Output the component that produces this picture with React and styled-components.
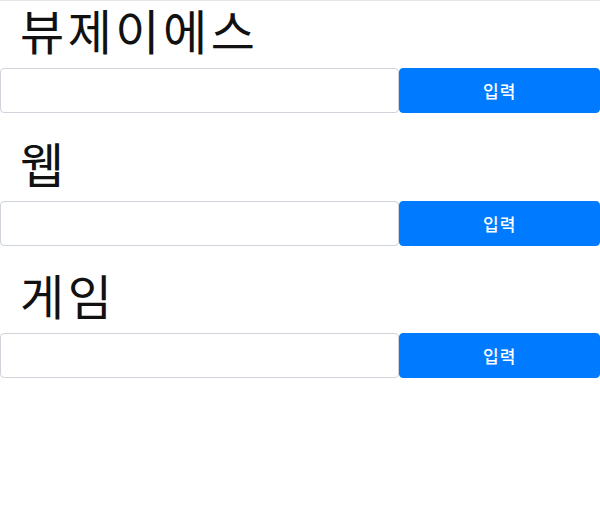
import React from "react";
import styled, { createGlobalStyle } from "styled-components";

const Global = createGlobalStyle`
  html, body { margin: 0; padding: 0; background: #fff; }
  body { font-family: "Noto Sans CJK KR", "Noto Sans", sans-serif; }
  * { box-sizing: border-box; }
`;

const Page = styled.div`
  border-top: 1px solid #e6e6e6;
  width: 600px;
`;

const Section = styled.section`
  margin-bottom: 20.5px;
`;

const Title = styled.h1`
  margin: 0 0 11px;
  padding-left: 20px;
  height: 56px;
  font-size: 48px;
  font-weight: 400;
  line-height: 56px;
  letter-spacing: 3.5px;
  color: #111;
`;

const Row = styled.div`
  display: flex;
  height: 45px;
`;

const Field = styled.input`
  flex: 2;
  min-width: 0;
  height: 100%;
  border: 1px solid #ced4da;
  border-radius: 4px;
  padding: 0 12px;
  font-size: 16px;
  font-family: inherit;
  background: #fff;
  outline: none;
`;

const Button = styled.button`
  flex: 1;
  height: 100%;
  border: 1px solid #007bff;
  border-radius: 4px;
  background: #007bff;
  color: #fff;
  font-size: 17px;
  font-weight: 500;
  letter-spacing: 1px;
  font-family: "Noto Sans CJK KR", sans-serif;
  cursor: pointer;
`;

const items = ["뷰제이에스", "웹", "게임"];

export default function App() {
  return (
    <Page>
      <Global />
      {items.map((t) => (
        <Section key={t}>
          <Title>{t}</Title>
          <Row>
            <Field type="text" />
            <Button>입력</Button>
          </Row>
        </Section>
      ))}
    </Page>
  );
}
